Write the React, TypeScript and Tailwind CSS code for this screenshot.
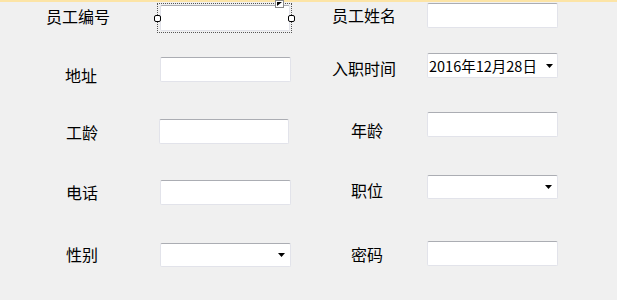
import React from "react";

const inputCls =
  "bg-white border border-[#e2e3ea] border-t-[#abadb3] rounded-[2px] box-border";

function Arrow() {
  return (
    <svg width="7" height="4" viewBox="0 0 7 4" className="shrink-0">
      <polygon points="0,0 7,0 3.5,4" fill="#000" />
    </svg>
  );
}

export default function App() {
  return (
    <div className="relative w-[617px] h-[300px] bg-[#f0f0f0] border-t-2 border-[#fce4a6] flex font-['Noto_Sans_CJK_SC',sans-serif] text-[16px] leading-[20px] text-black">
      {/* col 1: left labels */}
      <div className="w-[159px] flex flex-col shrink-0">
        <div className="mt-[4px] ml-[46px] h-[20px]">员工编号</div>
        <div className="mt-[39px] ml-[65px] h-[20px]">地址</div>
        <div className="mt-[37px] ml-[66px] h-[20px]">工龄</div>
        <div className="mt-[40px] ml-[66px] h-[20px]">电话</div>
        <div className="mt-[42px] ml-[66px] h-[20px]">性别</div>
      </div>

      {/* col 2: left inputs */}
      <div className="w-[170px] flex flex-col shrink-0">
        <div className="relative mt-[3px] ml-[1px] w-[130px] h-[26px]">
          <div className={`${inputCls} w-full h-full`} />
          <div className="absolute -left-[3px] -right-[2px] -top-[2px] -bottom-[2px] border border-dotted border-[#555]" />
          <div className="absolute left-[-6px] top-[10px] w-[7px] h-[7px] rounded-[2px] border border-black bg-white" />
          <div className="absolute right-[-5px] top-[10px] w-[7px] h-[7px] rounded-[2px] border border-black bg-white" />
        </div>
        <div className={`${inputCls} mt-[26px] ml-[1px] w-[131px] h-[25px]`} />
        <div className={`${inputCls} mt-[37px] ml-0 w-[130px] h-[25px]`} />
        <div className={`${inputCls} mt-[36px] ml-[1px] w-[131px] h-[25px]`} />
        <div className={`${inputCls} mt-[38px] ml-[1px] w-[131px] h-[24px] flex items-center justify-end pr-[5px]`}>
          <Arrow />
        </div>
      </div>

      {/* col 3: right labels */}
      <div className="w-[98px] flex flex-col shrink-0">
        <div className="mt-[3px] ml-[3px] h-[20px]">员工姓名</div>
        <div className="mt-[33px] ml-[3px] h-[20px]">入职时间</div>
        <div className="mt-[42px] ml-[22px] h-[20px]">年龄</div>
        <div className="mt-[40px] ml-[22px] h-[20px]">职位</div>
        <div className="mt-[44px] ml-[22px] h-[20px]">密码</div>
      </div>

      {/* col 4: right inputs */}
      <div className="w-[131px] flex flex-col shrink-0">
        <div className={`${inputCls} mt-[1px] w-[131px] h-[25px]`} />
        <div className={`${inputCls} mt-[25px] w-[131px] h-[25px] flex items-center justify-between pl-[1px] pr-[4px]`}>
          <span className="text-[14.5px] leading-[20px] whitespace-nowrap">2016年12月28日</span>
          <Arrow />
        </div>
        <div className={`${inputCls} mt-[34px] w-[131px] h-[25px]`} />
        <div className={`${inputCls} mt-[38px] w-[131px] h-[24px] flex items-center justify-end pr-[5px]`}>
          <Arrow />
        </div>
        <div className={`${inputCls} mt-[42px] w-[131px] h-[25px]`} />
      </div>

      {/* designer smart tag */}
      <div className="absolute left-[275px] top-[-2px] w-[9px] h-[8px] bg-white border border-[#888] flex items-start justify-start p-[1px]">
        <svg width="5" height="4" viewBox="0 0 5 4">
          <polygon points="0,0 5,0 0,4" fill="#000" />
        </svg>
      </div>
    </div>
  );
}
